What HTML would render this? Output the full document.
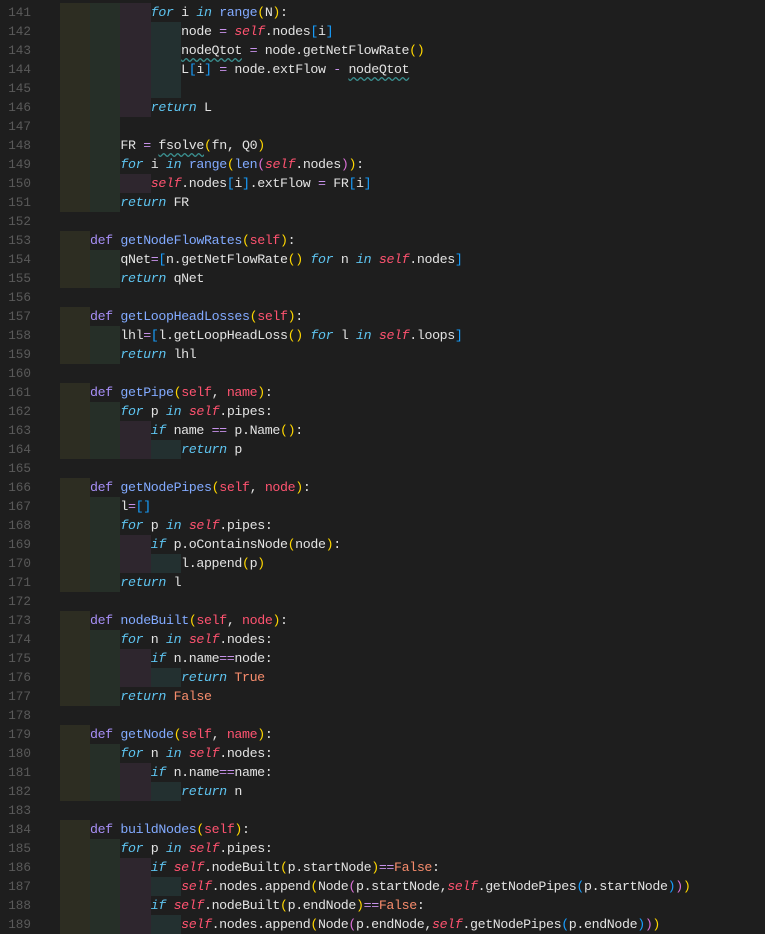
<!DOCTYPE html>
<html><head><meta charset="utf-8"><style>
html,body{margin:0;padding:0;background:#1e1e1e;width:765px;height:919px;overflow:hidden}
#ed{position:absolute;top:3px;left:0;width:765px;font-family:"Liberation Mono",monospace;font-size:13.3px;letter-spacing:-0.38px;line-height:19px;color:#e2e2e2}
.l{height:19px;white-space:pre;position:relative}
.n{position:absolute;left:0;width:31px;text-align:right;color:#5a5a5a;letter-spacing:0;font-size:12.67px}
.c{position:absolute;left:59.6px;top:0;height:19px}
.i1,.i2,.i3,.i4{display:inline-block;height:19px;vertical-align:top;width:30.4px;letter-spacing:0}
.i1{background:#2d2d22}.i2{background:#262f28}.i3{background:#2e262e}.i4{background:#233030}
.k{color:#5ec4f0;font-style:italic}
.d{color:#a68ef5}
.f{color:#82aaff}
.s{color:#ff5370;font-style:italic}
.p{color:#ff5370}
.o{color:#c792ea}
.t{color:#f78c6c}
.b1{color:#ffd700}.b2{color:#da70d6}.b3{color:#179fff}
.w{text-decoration:underline wavy #3a8f8f;text-underline-offset:3px}
</style></head><body><div id="ed">
<div class="l"><span class="n">141</span><span class="c"><span class="i1">    </span><span class="i2">    </span><span class="i3">    </span><span class="k">for</span> i <span class="k">in</span> <span class="f">range</span><span class="b1">(</span>N<span class="b1">)</span>:</span></div>
<div class="l"><span class="n">142</span><span class="c"><span class="i1">    </span><span class="i2">    </span><span class="i3">    </span><span class="i4">    </span>node <span class="o">=</span> <span class="s">self</span>.nodes<span class="b3">[</span>i<span class="b3">]</span></span></div>
<div class="l"><span class="n">143</span><span class="c"><span class="i1">    </span><span class="i2">    </span><span class="i3">    </span><span class="i4">    </span><span class="w">nodeQtot</span> <span class="o">=</span> node.getNetFlowRate<span class="b1">()</span></span></div>
<div class="l"><span class="n">144</span><span class="c"><span class="i1">    </span><span class="i2">    </span><span class="i3">    </span><span class="i4">    </span>L<span class="b3">[</span>i<span class="b3">]</span> <span class="o">=</span> node.extFlow <span class="o">-</span> <span class="w">nodeQtot</span></span></div>
<div class="l"><span class="n">145</span><span class="c"><span class="i1">    </span><span class="i2">    </span><span class="i3">    </span><span class="i4">    </span></span></div>
<div class="l"><span class="n">146</span><span class="c"><span class="i1">    </span><span class="i2">    </span><span class="i3">    </span><span class="k">return</span> L</span></div>
<div class="l"><span class="n">147</span><span class="c"><span class="i1">    </span><span class="i2">    </span></span></div>
<div class="l"><span class="n">148</span><span class="c"><span class="i1">    </span><span class="i2">    </span>FR <span class="o">=</span> <span class="w">fsolve</span><span class="b1">(</span>fn, Q0<span class="b1">)</span></span></div>
<div class="l"><span class="n">149</span><span class="c"><span class="i1">    </span><span class="i2">    </span><span class="k">for</span> i <span class="k">in</span> <span class="f">range</span><span class="b1">(</span><span class="f">len</span><span class="b2">(</span><span class="s">self</span>.nodes<span class="b2">)</span><span class="b1">)</span>:</span></div>
<div class="l"><span class="n">150</span><span class="c"><span class="i1">    </span><span class="i2">    </span><span class="i3">    </span><span class="s">self</span>.nodes<span class="b3">[</span>i<span class="b3">]</span>.extFlow <span class="o">=</span> FR<span class="b3">[</span>i<span class="b3">]</span></span></div>
<div class="l"><span class="n">151</span><span class="c"><span class="i1">    </span><span class="i2">    </span><span class="k">return</span> FR</span></div>
<div class="l"><span class="n">152</span></div>
<div class="l"><span class="n">153</span><span class="c"><span class="i1">    </span><span class="d">def</span> <span class="f">getNodeFlowRates</span><span class="b1">(</span><span class="p">self</span><span class="b1">)</span>:</span></div>
<div class="l"><span class="n">154</span><span class="c"><span class="i1">    </span><span class="i2">    </span>qNet<span class="o">=</span><span class="b3">[</span>n.getNetFlowRate<span class="b1">()</span> <span class="k">for</span> n <span class="k">in</span> <span class="s">self</span>.nodes<span class="b3">]</span></span></div>
<div class="l"><span class="n">155</span><span class="c"><span class="i1">    </span><span class="i2">    </span><span class="k">return</span> qNet</span></div>
<div class="l"><span class="n">156</span></div>
<div class="l"><span class="n">157</span><span class="c"><span class="i1">    </span><span class="d">def</span> <span class="f">getLoopHeadLosses</span><span class="b1">(</span><span class="p">self</span><span class="b1">)</span>:</span></div>
<div class="l"><span class="n">158</span><span class="c"><span class="i1">    </span><span class="i2">    </span>lhl<span class="o">=</span><span class="b3">[</span>l.getLoopHeadLoss<span class="b1">()</span> <span class="k">for</span> l <span class="k">in</span> <span class="s">self</span>.loops<span class="b3">]</span></span></div>
<div class="l"><span class="n">159</span><span class="c"><span class="i1">    </span><span class="i2">    </span><span class="k">return</span> lhl</span></div>
<div class="l"><span class="n">160</span></div>
<div class="l"><span class="n">161</span><span class="c"><span class="i1">    </span><span class="d">def</span> <span class="f">getPipe</span><span class="b1">(</span><span class="p">self</span>, <span class="p">name</span><span class="b1">)</span>:</span></div>
<div class="l"><span class="n">162</span><span class="c"><span class="i1">    </span><span class="i2">    </span><span class="k">for</span> p <span class="k">in</span> <span class="s">self</span>.pipes:</span></div>
<div class="l"><span class="n">163</span><span class="c"><span class="i1">    </span><span class="i2">    </span><span class="i3">    </span><span class="k">if</span> name <span class="o">==</span> p.Name<span class="b1">()</span>:</span></div>
<div class="l"><span class="n">164</span><span class="c"><span class="i1">    </span><span class="i2">    </span><span class="i3">    </span><span class="i4">    </span><span class="k">return</span> p</span></div>
<div class="l"><span class="n">165</span></div>
<div class="l"><span class="n">166</span><span class="c"><span class="i1">    </span><span class="d">def</span> <span class="f">getNodePipes</span><span class="b1">(</span><span class="p">self</span>, <span class="p">node</span><span class="b1">)</span>:</span></div>
<div class="l"><span class="n">167</span><span class="c"><span class="i1">    </span><span class="i2">    </span>l<span class="o">=</span><span class="b3">[]</span></span></div>
<div class="l"><span class="n">168</span><span class="c"><span class="i1">    </span><span class="i2">    </span><span class="k">for</span> p <span class="k">in</span> <span class="s">self</span>.pipes:</span></div>
<div class="l"><span class="n">169</span><span class="c"><span class="i1">    </span><span class="i2">    </span><span class="i3">    </span><span class="k">if</span> p.oContainsNode<span class="b1">(</span>node<span class="b1">)</span>:</span></div>
<div class="l"><span class="n">170</span><span class="c"><span class="i1">    </span><span class="i2">    </span><span class="i3">    </span><span class="i4">    </span>l.append<span class="b1">(</span>p<span class="b1">)</span></span></div>
<div class="l"><span class="n">171</span><span class="c"><span class="i1">    </span><span class="i2">    </span><span class="k">return</span> l</span></div>
<div class="l"><span class="n">172</span></div>
<div class="l"><span class="n">173</span><span class="c"><span class="i1">    </span><span class="d">def</span> <span class="f">nodeBuilt</span><span class="b1">(</span><span class="p">self</span>, <span class="p">node</span><span class="b1">)</span>:</span></div>
<div class="l"><span class="n">174</span><span class="c"><span class="i1">    </span><span class="i2">    </span><span class="k">for</span> n <span class="k">in</span> <span class="s">self</span>.nodes:</span></div>
<div class="l"><span class="n">175</span><span class="c"><span class="i1">    </span><span class="i2">    </span><span class="i3">    </span><span class="k">if</span> n.name<span class="o">==</span>node:</span></div>
<div class="l"><span class="n">176</span><span class="c"><span class="i1">    </span><span class="i2">    </span><span class="i3">    </span><span class="i4">    </span><span class="k">return</span> <span class="t">True</span></span></div>
<div class="l"><span class="n">177</span><span class="c"><span class="i1">    </span><span class="i2">    </span><span class="k">return</span> <span class="t">False</span></span></div>
<div class="l"><span class="n">178</span></div>
<div class="l"><span class="n">179</span><span class="c"><span class="i1">    </span><span class="d">def</span> <span class="f">getNode</span><span class="b1">(</span><span class="p">self</span>, <span class="p">name</span><span class="b1">)</span>:</span></div>
<div class="l"><span class="n">180</span><span class="c"><span class="i1">    </span><span class="i2">    </span><span class="k">for</span> n <span class="k">in</span> <span class="s">self</span>.nodes:</span></div>
<div class="l"><span class="n">181</span><span class="c"><span class="i1">    </span><span class="i2">    </span><span class="i3">    </span><span class="k">if</span> n.name<span class="o">==</span>name:</span></div>
<div class="l"><span class="n">182</span><span class="c"><span class="i1">    </span><span class="i2">    </span><span class="i3">    </span><span class="i4">    </span><span class="k">return</span> n</span></div>
<div class="l"><span class="n">183</span></div>
<div class="l"><span class="n">184</span><span class="c"><span class="i1">    </span><span class="d">def</span> <span class="f">buildNodes</span><span class="b1">(</span><span class="p">self</span><span class="b1">)</span>:</span></div>
<div class="l"><span class="n">185</span><span class="c"><span class="i1">    </span><span class="i2">    </span><span class="k">for</span> p <span class="k">in</span> <span class="s">self</span>.pipes:</span></div>
<div class="l"><span class="n">186</span><span class="c"><span class="i1">    </span><span class="i2">    </span><span class="i3">    </span><span class="k">if</span> <span class="s">self</span>.nodeBuilt<span class="b1">(</span>p.startNode<span class="b1">)</span><span class="o">==</span><span class="t">False</span>:</span></div>
<div class="l"><span class="n">187</span><span class="c"><span class="i1">    </span><span class="i2">    </span><span class="i3">    </span><span class="i4">    </span><span class="s">self</span>.nodes.append<span class="b1">(</span>Node<span class="b2">(</span>p.startNode,<span class="s">self</span>.getNodePipes<span class="b3">(</span>p.startNode<span class="b3">)</span><span class="b2">)</span><span class="b1">)</span></span></div>
<div class="l"><span class="n">188</span><span class="c"><span class="i1">    </span><span class="i2">    </span><span class="i3">    </span><span class="k">if</span> <span class="s">self</span>.nodeBuilt<span class="b1">(</span>p.endNode<span class="b1">)</span><span class="o">==</span><span class="t">False</span>:</span></div>
<div class="l"><span class="n">189</span><span class="c"><span class="i1">    </span><span class="i2">    </span><span class="i3">    </span><span class="i4">    </span><span class="s">self</span>.nodes.append<span class="b1">(</span>Node<span class="b2">(</span>p.endNode,<span class="s">self</span>.getNodePipes<span class="b3">(</span>p.endNode<span class="b3">)</span><span class="b2">)</span><span class="b1">)</span></span></div>
</div></body></html>
